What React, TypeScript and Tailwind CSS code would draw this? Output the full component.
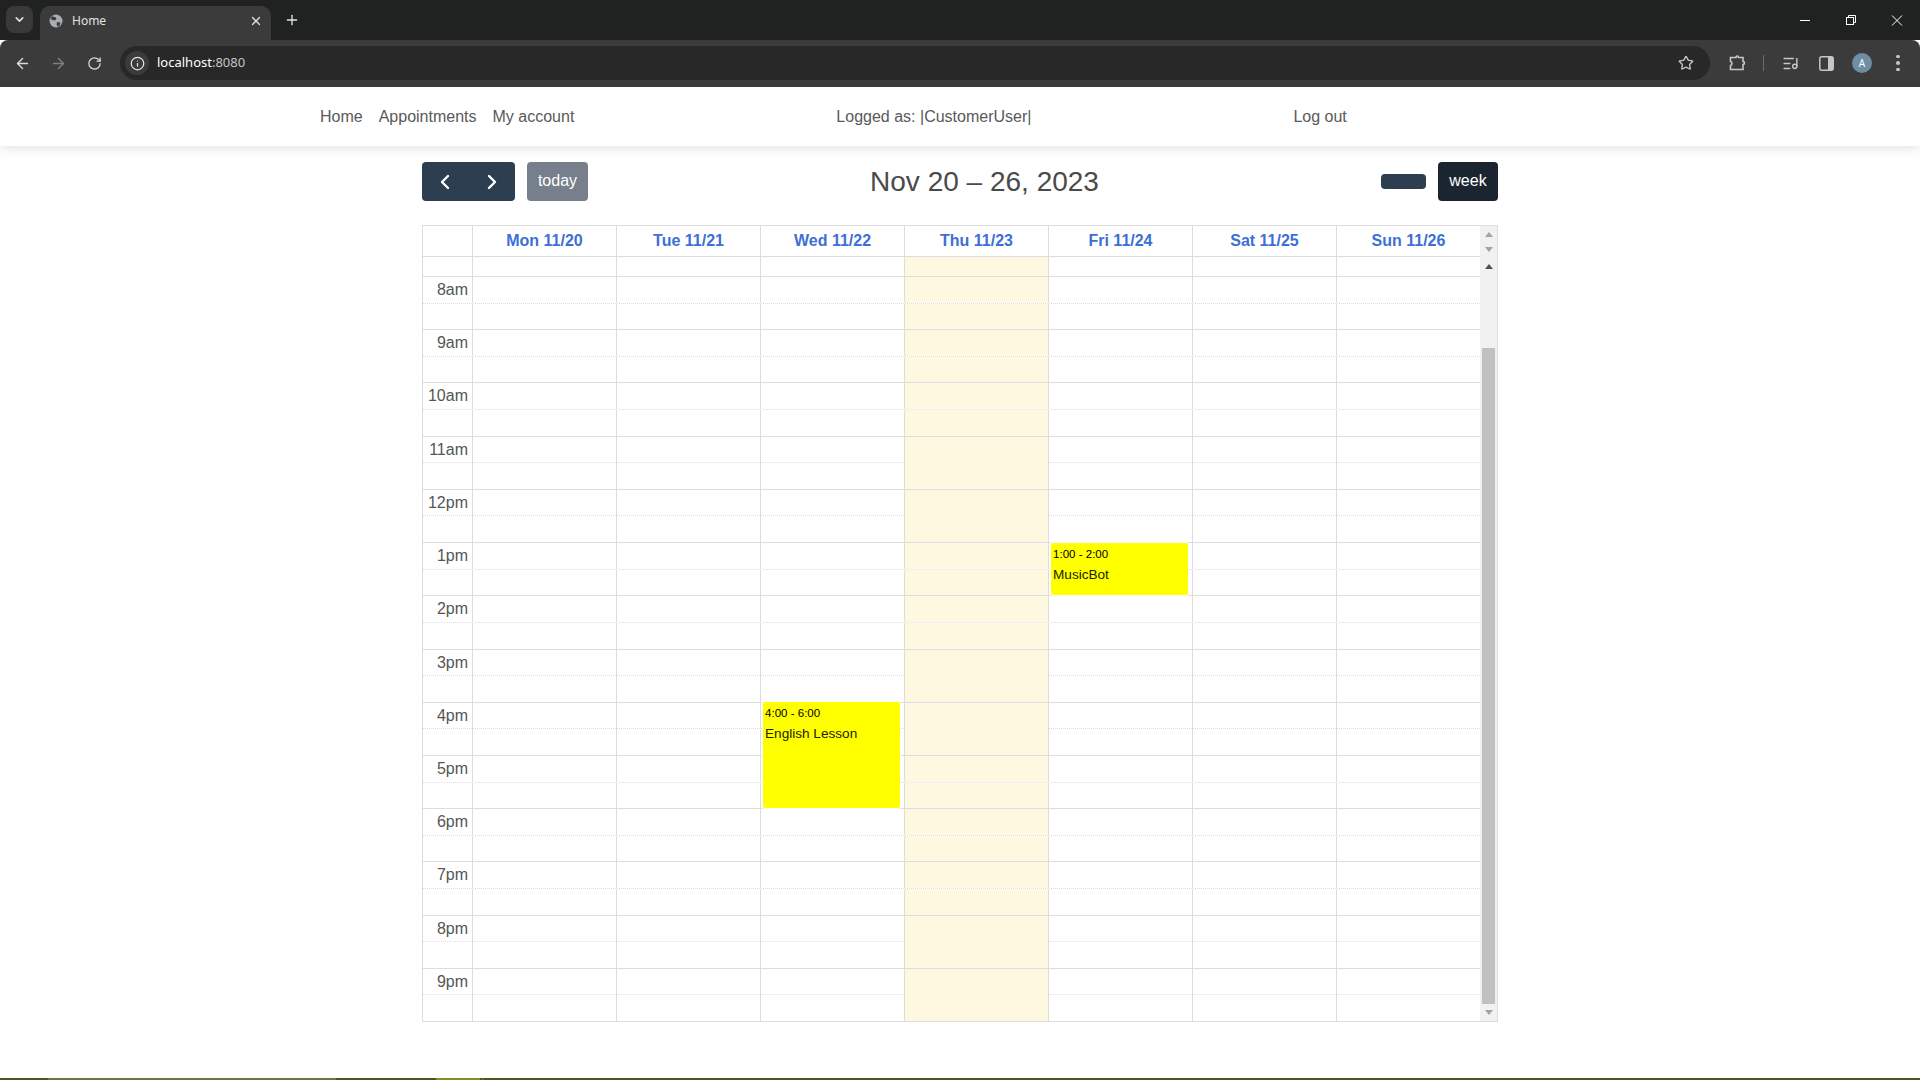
import React from "react";
import { ArrowLeft, ArrowRight, ChevronDown, ChevronLeft, ChevronRight, Info, ListMusic, Plus, RotateCw, Star, X } from "lucide-react";

const days = ["Mon 11/20", "Tue 11/21", "Wed 11/22", "Thu 11/23", "Fri 11/24", "Sat 11/25", "Sun 11/26"];
const hours = ["8am", "9am", "10am", "11am", "12pm", "1pm", "2pm", "3pm", "4pm", "5pm", "6pm", "7pm", "8pm", "9pm"];

const Triangle = ({ up, color }: { up?: boolean; color: string }) => (
  <svg width="8" height="5" viewBox="0 0 8 5" className="block">
    <path d={up ? "M4 0L8 5H0Z" : "M0 0H8L4 5Z"} fill={color} />
  </svg>
);

const TabStrip = () => (
  <div className="flex h-[40px] bg-[#202221] relative">
    <div className="ml-[6px] mt-[6px] w-[27px] h-[27px] rounded-[8px] bg-[#393939] flex items-center justify-center">
      <ChevronDown size={13} strokeWidth={3} className="text-[#e3e3e3]" />
    </div>
    <div className="ml-[7px] mt-[6px] w-[231px] h-[34px] pb-[5px] rounded-t-[10px] bg-[#3b3b3b] flex items-center pl-[9px] pr-[8px]">
      <svg width="14" height="14" viewBox="0 0 14 14" className="shrink-0">
        <circle cx="7" cy="7" r="6.5" fill="#a9adb2" />
        <path d="M3 2.2L6.5 3.2 7.6 5 5.8 6.6 3.8 6 1.5 5ZM8 8L11.5 8.6 10.6 11.5 8.6 12.8 7.6 10.5Z" fill="#3b3b3b" />
      </svg>
      <span className="ml-[9px] text-[12px] text-[#e3e3e3] [font-family:'Noto_Sans',sans-serif]">Home</span>
      <X size={14} strokeWidth={2.2} className="ml-auto text-[#e3e3e3]" />
    </div>
    <Plus size={16} strokeWidth={2} className="ml-[13px] mt-[12px] text-[#e3e3e3]" />
    <div className="ml-auto flex items-start text-white">
      <svg width="46" height="40" viewBox="0 0 46 40"><path d="M18 20.5H28" stroke="#fff" strokeWidth="1" /></svg>
      <svg width="46" height="40" viewBox="0 0 46 40" fill="none" stroke="#fff" strokeWidth="1"><rect x="18.5" y="17.5" width="7" height="7" /><path d="M20.5 17.5V15.5H27.5V22.5H25.5" /></svg>
      <svg width="46" height="40" viewBox="0 0 46 40" fill="none" stroke="#fff" strokeWidth="1"><path d="M18 15.5L28 25.5M28 15.5L18 25.5" /></svg>
    </div>
  </div>
);

const AddressBar = () => (
  <div className="flex items-center h-[47px] pb-[1px] bg-[#3b3b3b] rounded-t-[8px] text-[#dcdcdc]">
    <ArrowLeft size={17} strokeWidth={2} className="ml-[14px]" />
    <ArrowRight size={17} strokeWidth={2} className="ml-[19px] text-[#7f7f7f]" />
    <RotateCw size={15} strokeWidth={2} className="ml-[20px]" />
    <div className="ml-[18px] w-[1590px] h-[34px] rounded-full bg-[#282828] flex items-center pl-[5px]">
      <div className="w-[24px] h-[24px] rounded-full bg-[#3b3b3b] flex items-center justify-center">
        <Info size={15} strokeWidth={2} className="text-[#e3e3e3]" />
      </div>
      <span className="ml-[8px] text-[13px] [font-family:'Noto_Sans',sans-serif] text-white">
        localhost<span className="text-[#c4c4c4]">:8080</span>
      </span>
      <Star size={16} strokeWidth={2} className="ml-auto mr-[16px] text-[#c7c7c7]" />
    </div>
    <svg width="18" height="18" viewBox="0 0 18 18" fill="none" stroke="#c7c7c7" strokeWidth="1.6" className="ml-[18px]">
      <path d="M6 3.5H8C8 1.5 10.5 1.5 10.5 3.5H15V7.5C17 7.5 17 10.5 15 10.5V15.5H2.5V11.5C4.5 11 4.5 8 2.5 7.5V3.5Z" />
    </svg>
    <div className="ml-[17px] w-px h-[16px] bg-[#6b6b6b]" />
    <ListMusic size={17} strokeWidth={2} className="ml-[18px] text-[#c7c7c7]" />
    <svg width="15" height="15" viewBox="0 0 15 15" className="ml-[20px]">
      <rect x="0.8" y="0.8" width="13.4" height="13.4" rx="2" fill="none" stroke="#c7c7c7" strokeWidth="1.5" />
      <rect x="9" y="1" width="5" height="13" fill="#c7c7c7" />
    </svg>
    <div className="ml-[18px] w-[20px] h-[20px] rounded-full bg-[#6d8ea3] flex items-center justify-center text-[10px] text-white [font-family:'Noto_Sans',sans-serif]">
      A
    </div>
    <div className="ml-[24px] flex flex-col gap-[3px]">
      <div className="w-[3.5px] h-[3.5px] rounded-full bg-[#c7c7c7]" />
      <div className="w-[3.5px] h-[3.5px] rounded-full bg-[#c7c7c7]" />
      <div className="w-[3.5px] h-[3.5px] rounded-full bg-[#c7c7c7]" />
    </div>
  </div>
);

const Navbar = () => (
  <div className="relative z-20 flex items-center h-[59px] pl-[312px] bg-white text-[16px] text-[#595959] shadow-[0_3px_10px_rgba(0,0,0,0.1)]">
    <a className="px-[8px]">Home</a>
    <a className="px-[8px]">Appointments</a>
    <a className="px-[8px]">My account</a>
    <span className="ml-[254px]">Logged as: |CustomerUser|</span>
    <a className="ml-[262px]">Log out</a>
  </div>
);

const Toolbar = () => (
  <div className="flex items-center justify-between mb-[24px] text-white text-[16px]">
    <div className="flex items-center">
      <div className="flex w-[93px] h-[39px] rounded-[4px] bg-[#2c3e50]">
        <button className="flex-1 flex items-center justify-center"><ChevronLeft size={24} strokeWidth={2.4} /></button>
        <button className="flex-1 flex items-center justify-center"><ChevronRight size={24} strokeWidth={2.4} /></button>
      </div>
      <button className="ml-[12px] w-[61px] h-[39px] pb-[2px] rounded-[4px] bg-[#767f8b]">today</button>
    </div>
    <h2 className="text-[28px] leading-[34px] font-normal text-[#4a4a4a]">Nov 20 – 26, 2023</h2>
    <div className="flex items-center">
      <button className="w-[45px] h-[15px] rounded-[4px] bg-[#2c3e50]" />
      <button className="ml-[12px] w-[60px] h-[39px] pb-[2px] rounded-[4px] bg-[#1a252f]">week</button>
    </div>
  </div>
);

const CalEvent = ({ time, title, height, top }: { time: string; title: string; height: string; top: string }) => (
  <div className={`absolute z-10 left-[2px] ${top} w-[137px] ${height} pl-[2px] rounded-[2px] bg-[#ffff00] text-black shadow-[0_0_0_1px_#ffffff]`}>
    <div className="text-[11.56px] leading-[13px] mt-[5px]">{time}</div>
    <div className="text-[13.6px] leading-[16px] mt-[6px] text-[#222200]">{title}</div>
  </div>
);

const Row = ({ label, solid, hour, half }: { label?: string; solid: boolean; hour?: string; half?: boolean }) => (
  <div className={`grid grid-cols-[50px_repeat(6,144px)_143px] h-[26.62px] ${solid ? "border-b border-[#dddddd]" : "border-b border-dotted border-[#dddddd]"}`}>
    <div className="border-r border-[#dddddd] text-right pr-[4px] text-[16px] leading-[26px] text-[#555555]">{label}</div>
    {days.map((d, i) => (
      <div key={d} className={`relative ${i < 6 ? "border-r border-[#dddddd]" : ""} ${i === 3 ? "bg-[#fff8e0]" : ""}`}>
        {i === 2 && hour === "4pm" && !half && <CalEvent time="4:00 - 6:00" title="English Lesson" height="h-[106px]" top="top-[-1px]" />}
        {i === 4 && hour === "1pm" && !half && <CalEvent time="1:00 - 2:00" title="MusicBot" height="h-[52px]" top="top-0" />}
      </div>
    ))}
  </div>
);

const Calendar = () => (
  <div className="flex h-[797px] border border-[#dddddd]">
    <div className="w-[1057px] overflow-hidden">
      <div className="grid grid-cols-[50px_repeat(6,144px)_143px] h-[31px] border-b border-[#dddddd]">
        <div className="border-r border-[#dddddd]" />
        {days.map((d, i) => (
          <div key={d} className={`text-center text-[16px] font-bold leading-[29px] text-[#3d6fd4] ${i < 6 ? "border-r border-[#dddddd]" : ""}`}>{d}</div>
        ))}
      </div>
      <div className="grid grid-cols-[50px_repeat(6,144px)_143px] h-[20px] border-b border-[#dddddd]">
        <div className="border-r border-[#dddddd]" />
        {days.map((d, i) => (
          <div key={d} className={`${i < 6 ? "border-r border-[#dddddd]" : ""} ${i === 3 ? "bg-[#fff8e0]" : ""}`} />
        ))}
      </div>
      {hours.map((h) => (
        <React.Fragment key={h}>
          <Row label={h} hour={h} solid={false} />
          <Row hour={h} half solid />
        </React.Fragment>
      ))}
    </div>
    <div className="flex-1 flex flex-col items-center bg-[#f1f1f1]">
      <div className="mt-[6px]"><Triangle up color="#a3a3a3" /></div>
      <div className="mt-[10px]"><Triangle color="#a3a3a3" /></div>
      <div className="mt-[12px]"><Triangle up color="#505050" /></div>
      <div className="mt-[79px] w-[13px] h-[656px] bg-[#c1c1c1]" />
      <div className="mt-[6px]"><Triangle color="#a3a3a3" /></div>
    </div>
  </div>
);

const App = () => {
  return (
    <div className="flex flex-col h-screen bg-white overflow-hidden [font-family:'Liberation_Sans',Arial,sans-serif]">
      <TabStrip />
      <AddressBar />
      <Navbar />
      <div className="w-[1076px] ml-[422px] pt-[16px]">
        <Toolbar />
        <Calendar />
      </div>
      <div className="mt-auto flex h-[2px] bg-[#4d5325]">
        <div className="ml-[48px] w-[288px] bg-[#6c7344]" />
        <div className="ml-[100px] w-[44px] bg-[#828f28]" />
        <div className="ml-[1px] w-[3px] bg-[#5b6a24]" />
      </div>
    </div>
  );
};

export default App;
